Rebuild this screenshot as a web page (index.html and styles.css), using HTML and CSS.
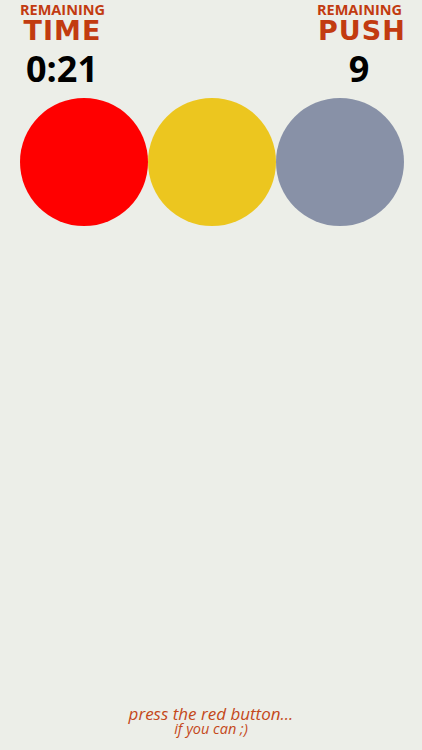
FILE: index.html
```html
<!DOCTYPE html>
<html lang="en">
<head>
    <meta charset="UTF-8"/>
    <title>Red Button</title>
<link rel="stylesheet" href="styles.css">
</head>
<body>
    <div id="game">
        <!-- counters -->
        <div class="top">
            <div class="stat">
                <div class="label">REMAINING</div>
                <div class="title">TIME</div>
                <div class="value">0:21</div>
            </div>
            <div class="stat">
                <div class="label">REMAINING</div>
                <div class="title">PUSH</div>
                <div class="value">9</div>
            </div>
        </div>

        <!-- buttons -->
        <div class="buttons">
            <span class="btn red"></span>
            <span class="btn yellow"></span>
            <span class="btn grey"></span>
        </div>

        <div class="hint">
            <div class="line">press the red button...</div>
            <div class="small">if you can ;)</div>
        </div>
    </div>
</body>
</html>
```

FILE: styles.css
```css
* {
    margin: 0;
    padding: 0;
    box-sizing: border-box;
}

html, body {
    height: 100%;
    background: #eceee8;
    font-family: "Open Sans", sans-serif;
}

#game {
    display: flex;
    flex-direction: column;
    height: 750px;
}

.top {
    display: flex;
    justify-content: space-between;
    padding: 3px 21px 0 20px;
}

.stat {
    width: 84px;
    text-align: center;
}

.label {
    color: #c23b10;
    font-weight: 700;
    font-size: 14.5px;
    line-height: 14px;
}

.title {
    color: #c23b10;
    font-family: "DejaVu Sans", sans-serif;
    font-weight: 700;
    font-size: 27px;
    line-height: 26px;
    letter-spacing: 1px;
    padding-left: 1px;
    margin-top: 1px;
}

.value {
    color: #000;
    font-weight: 700;
    font-size: 36px;
    line-height: 36px;
    margin-top: 7px;
}

.buttons {
    display: flex;
    padding-left: 20px;
    margin-top: 11px;
}

.btn {
    width: 128px;
    height: 128px;
    border-radius: 50%;
}

.red { background: #ff0000; }
.yellow { background: #ecc61f; }
.grey { background: #8891a7; }

/* footer text */
.hint {
    margin-top: auto;
    padding-bottom: 14px;
    text-align: center;
    color: #c4481a;
    font-style: italic;
}

.hint .line {
    font-size: 17px;
    line-height: 16px;
}

.hint .small {
    font-size: 14.5px;
    line-height: 14px;
}
```
